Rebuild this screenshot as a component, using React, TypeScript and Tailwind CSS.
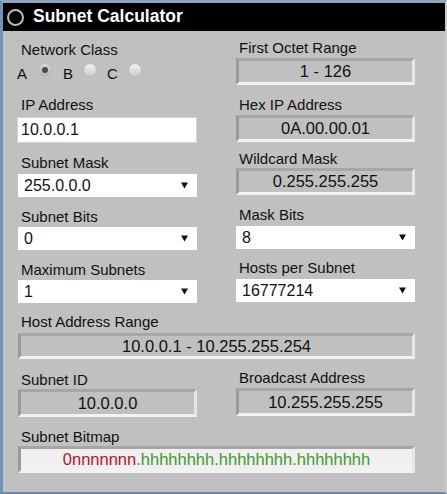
import React from "react";

const FONT = { fontFamily: '"Liberation Sans", Arial, sans-serif' };

function Label({ children, className = "" }: { children: React.ReactNode; className?: string }) {
  return <div className={`h-4 leading-4 text-[15px] pl-[3px] text-[#111] whitespace-nowrap ${className}`}>{children}</div>;
}

function Box({ children, className = "", light = false }: { children: React.ReactNode; className?: string; light?: boolean }) {
  return (
    <div
      className={`flex items-center justify-center text-[16.5px] text-[#111] border-t-[3px] border-l-[3px] border-b-[3px] border-r-[3px] border-t-[#a6a6a6] border-l-[#9a9a9a] border-b-[#f2f2f2] border-r-[#e6e6e6] whitespace-nowrap ${light ? "bg-[#f0f0f0]" : "bg-[#c0c0c0]"} ${className}`}
    >
      {children}
    </div>
  );
}

function Select({ value, className = "" }: { value: string; className?: string }) {
  return (
    <div className={`h-[23px] w-[179px] bg-white flex items-center justify-between pl-[6px] pr-[9px] text-[16px] text-[#111] ${className}`}>
      <span>{value}</span>
      <svg width="7" height="7" viewBox="0 0 7 7">
        <path d="M0 0.5 H7 L3.5 6.5 Z" fill="#111" />
      </svg>
    </div>
  );
}

function Radio({ checked = false, className = "" }: { checked?: boolean; className?: string }) {
  return (
    <div
      className={`w-[14px] h-[14px] rounded-full border border-[#b8b8b8] flex items-center justify-center ${checked ? "bg-linear-to-b from-[#d8d8d8] to-[#b4b4b4]" : "bg-linear-to-b from-[#f2f2f2] to-[#cdcdcd]"} ${className}`}
    >
      {checked && <div className="w-[6px] h-[6px] rounded-full bg-[#4a4a4a]" />}
    </div>
  );
}

export default function App() {
  return (
    <div
      style={FONT}
      className="w-[447px] h-[494px] bg-[#c0c0c0] border-t-[3px] border-l-[3px] border-b-[2px] border-r-[2px] border-t-[#8ea5c0] border-l-[#7391b4] border-b-[#6f89ab] border-r-[#cacaca] flex flex-col overflow-hidden"
    >
      <div className="h-[28px] bg-black flex items-center shrink-0">
        <div className="ml-[4px] w-[17px] h-[17px] rounded-full border-2 border-[#bdbdbd]" />
        <span className="ml-[9px] text-white font-bold text-[17.5px] leading-none">Subnet Calculator</span>
      </div>

      <div className="flex flex-col pl-[15px]">
        <div className="flex gap-[39px] items-start">
          <div className="flex flex-col w-[179px]">
            <Label className="mt-[11px]">Network Class</Label>
            <div className="mt-[4px] h-[22px] flex items-start text-[15px] text-[#111]">
              <span className="leading-[20px] mt-[2px] -ml-[1px]">A</span>
              <Radio checked className="ml-[11px] mt-[1px]" />
              <span className="leading-[20px] mt-[2px] ml-[11px]">B</span>
              <Radio className="ml-[10px] mt-[1px]" />
              <span className="leading-[20px] mt-[2px] ml-[10px]">C</span>
              <Radio className="ml-[10px] mt-[1px]" />
            </div>
            <Label className="mt-[13px]">IP Address</Label>
            <input
              readOnly
              value="10.0.0.1"
              style={FONT}
              className="mt-[4px] h-[26px] w-[180px] -ml-[1px] bg-white border border-[#d4d4d4] pl-[3px] text-[16px] text-[#111] outline-none"
            />
            <Label className="mt-[12px]">Subnet Mask</Label>
            <Select value="255.0.0.0" className="mt-[3px]" />
            <Label className="mt-[12px]">Subnet Bits</Label>
            <Select value="0" className="mt-[2px]" />
            <Label className="mt-[12px]">Maximum Subnets</Label>
            <Select value="1" className="mt-[2px]" />
          </div>

          <div className="flex flex-col w-[179px]">
            <Label className="mt-[9px]">First Octet Range</Label>
            <Box className="mt-[2px] h-[27px]">1 - 126</Box>
            <Label className="mt-[12px]">Hex IP Address</Label>
            <Box className="mt-[2px] h-[27px]">0A.00.00.01</Box>
            <Label className="mt-[9px]">Wildcard Mask</Label>
            <Box className="mt-[1px] h-[27px]">0.255.255.255</Box>
            <Label className="mt-[12px]">Mask Bits</Label>
            <Select value="8" className="mt-[3px]" />
            <Label className="mt-[11px]">Hosts per Subnet</Label>
            <Select value="16777214" className="mt-[3px]" />
          </div>
        </div>

        <Label className="mt-[11px]">Host Address Range</Label>
        <Box className="mt-[3px] h-[26px] w-[397px]">10.0.0.1 - 10.255.255.254</Box>

        <div className="flex gap-[39px] items-start">
          <div className="flex flex-col w-[179px]">
            <Label className="mt-[13px]">Subnet ID</Label>
            <Box className="mt-[1px] h-[28px]">10.0.0.0</Box>
          </div>
          <div className="flex flex-col w-[179px]">
            <Label className="mt-[11px]">Broadcast Address</Label>
            <Box className="mt-[2px] h-[28px]">10.255.255.255</Box>
          </div>
        </div>

        <Label className="mt-[12px]">Subnet Bitmap</Label>
        <Box light className="mt-[1px] h-[27px] w-[397px]">
          <span className="text-[#c0102e]">0nnnnnnn</span>
          <span className="text-[#2f8f7f]">.</span>
          <span className="text-[#3f9a2a]">hhhhhhhh.hhhhhhhh.hhhhhhhh</span>
        </Box>
      </div>
    </div>
  );
}
